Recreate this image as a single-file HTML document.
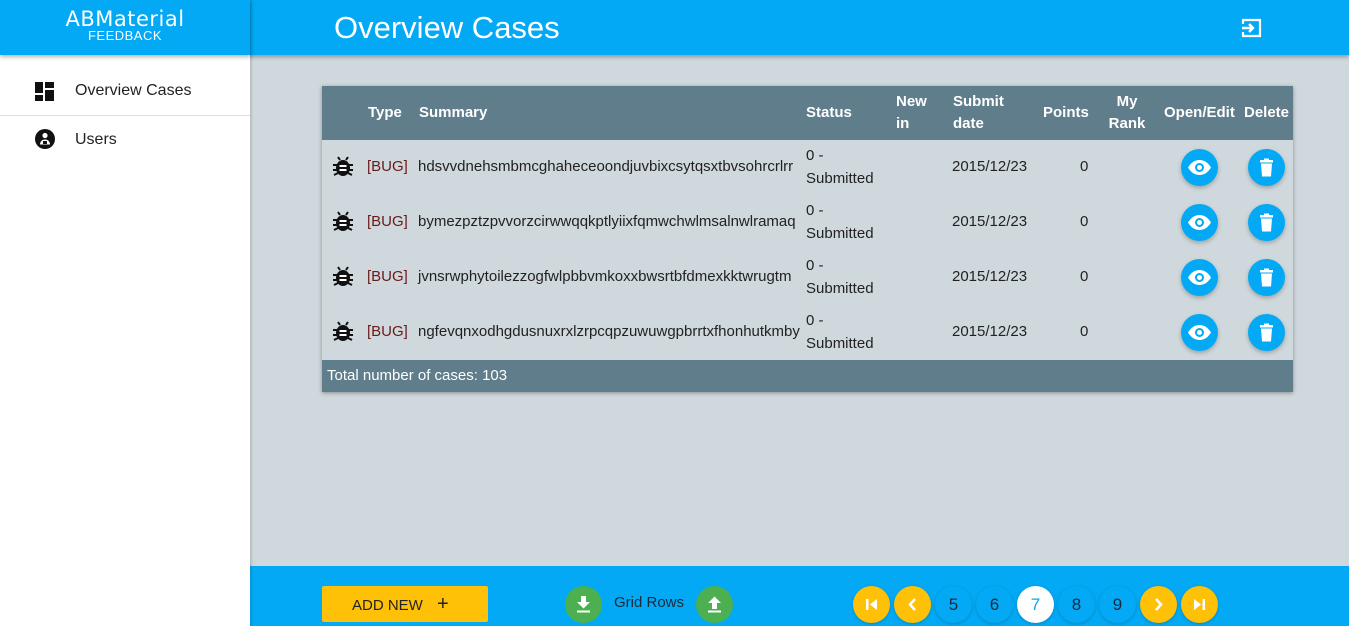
<!DOCTYPE html>
<html style="width:1349px;height:626px;overflow:hidden"><head><meta charset="utf-8"><style>
*{margin:0;padding:0;box-sizing:border-box}
body{width:1349px;height:626px;overflow:hidden;background:#cfd8dc;font-family:"Liberation Sans",Arial,sans-serif;position:relative}
.a{position:absolute}
.hdr{left:0;top:0;width:1349px;height:55px;background:#03a9f4;box-shadow:0 2px 4px rgba(0,0,0,.3)}
.side{left:0;top:0;width:250px;height:626px;background:#fff;box-shadow:1px 0 3px rgba(0,0,0,.2);z-index:2}
.logo{left:0;top:0;width:250px;height:55px;background:#03a9f4;color:#fff;text-align:center;box-shadow:0 2px 4px rgba(0,0,0,.3)}
.tbl{left:322px;top:86px;width:971px;height:306px;background:#cfd8dc;box-shadow:0 1px 4px rgba(0,0,0,.35)}
.th{left:0;top:0;width:971px;height:54px;background:#607d8b}
.hc{color:#fff;font-weight:bold;font-size:15px;line-height:22px}
.td{font-size:15px;color:#222;line-height:23px}
.circ{border-radius:50%;width:37px;height:37px;background:#03a9f4;box-shadow:0 2px 4px rgba(0,0,0,.25)}
.foot{left:0;top:566px;width:1349px;height:60px;background:#03a9f4}
.pg{width:37px;height:37px;border-radius:50%;top:586px;background:#03a9f4;box-shadow:0 1px 3px rgba(0,0,0,.2);color:#1a2a3a;font-size:17px;text-align:center;line-height:37px}
.y{background:#ffc107;color:#fff}
</style></head><body>
<div class="a hdr"></div>
<div class="a" style="left:334px;top:10px;color:#fff;font-size:31px;">Overview Cases</div>
<svg class="a" style="left:1241px;top:18px" width="22" height="20" viewBox="0 0 22 20"><path d="M2 6V2h17v16H2v-4" fill="none" stroke="#fff" stroke-width="2.2"/><path d="M1 10h11M8 6l4 4-4 4" fill="none" stroke="#fff" stroke-width="2.4"/></svg>
<div class="a side"></div>
<div class="a logo" style="z-index:3"><div style="font-size:21px;letter-spacing:0.5px;padding-top:9px;line-height:20px;font-family:'DejaVu Sans',sans-serif">ABMaterial</div><div style="font-size:13px;line-height:14px;letter-spacing:.5px">FEEDBACK</div></div>
<div class="a" style="z-index:3;left:0;top:115px;width:250px;height:1px;background:#ddd"></div>
<svg class="a" style="z-index:3;left:35px;top:82px" width="19" height="19" viewBox="0 0 19 19"><rect x="0" y="0" width="8" height="11" fill="#111"/><rect x="0" y="13" width="8" height="6" fill="#111"/><rect x="10" y="0" width="9" height="6" fill="#111"/><rect x="10" y="8" width="9" height="11" fill="#111"/></svg>
<div class="a" style="z-index:3;left:75px;top:82px;font-size:16px;color:#222">Overview Cases</div>
<svg class="a" style="z-index:3;left:35px;top:129px" width="20" height="20" viewBox="0 0 20 20"><circle cx="10" cy="10" r="10" fill="#111"/><circle cx="10" cy="6.5" r="2.6" fill="#fff"/><path d="M5 15.5c0-3 2.2-5 5-5s5 2 5 5z" fill="#fff"/><rect x="8" y="12" width="4" height="3" fill="#111"/></svg>
<div class="a" style="z-index:3;left:75px;top:131px;font-size:16px;color:#222">Users</div>

<div class="a tbl">
<div class="a th"></div>
<div class="a hc" style="left:46px;top:16px">Type</div>
<div class="a hc" style="left:97px;top:16px">Summary</div>
<div class="a hc" style="left:484px;top:16px">Status</div>
<div class="a hc" style="left:574px;top:5px">New<br>in</div>
<div class="a hc" style="left:631px;top:5px">Submit<br>date</div>
<div class="a hc" style="left:721px;top:16px">Points</div>
<div class="a hc" style="left:786px;top:5px;text-align:center;width:38px">My<br>Rank</div>
<div class="a hc" style="left:842px;top:16px">Open/Edit</div>
<div class="a hc" style="left:922px;top:16px">Delete</div>
<div class="a" style="left:0;top:274px;width:971px;height:32px;background:#607d8b;color:#fff;font-size:15px;line-height:32px;padding-left:5px">Total number of cases: 103</div>
</div>

<svg width="0" height="0" style="position:absolute"><defs>
<g id="bug"><path d="M7 2l2 3M17 2l-2 3" stroke="#111" stroke-width="2"/><ellipse cx="12" cy="13" rx="7" ry="8" fill="#111"/><path d="M2 10h4M18 10h4M2 15h4M18 15h4M3 20l4-2M21 20l-4-2" stroke="#111" stroke-width="2"/><rect x="8.5" y="10" width="7" height="2" fill="#fff"/><rect x="8.5" y="14" width="7" height="2" fill="#fff"/></g>
</defs></svg>

<svg class="a" style="left:331px;top:155px" width="24" height="24" viewBox="0 0 24 24"><use href="#bug"/></svg>
<div class="a td" style="left:367px;top:155px;color:#6a1a1a">[BUG]</div>
<div class="a td" style="left:418px;top:155px">hdsvvdnehsmbmcghaheceoondjuvbixcsytqsxtbvsohrcrlrr</div>
<div class="a td" style="left:806px;top:144px">0 -<br>Submitted</div>
<div class="a td" style="left:952px;top:155px">2015/12/23</div>
<div class="a td" style="left:1080px;top:155px">0</div>

<svg class="a" style="left:331px;top:210px" width="24" height="24" viewBox="0 0 24 24"><use href="#bug"/></svg>
<div class="a td" style="left:367px;top:210px;color:#6a1a1a">[BUG]</div>
<div class="a td" style="left:418px;top:210px">bymezpztzpvvorzcirwwqqkptlyiixfqmwchwlmsalnwlramaq</div>
<div class="a td" style="left:806px;top:199px">0 -<br>Submitted</div>
<div class="a td" style="left:952px;top:210px">2015/12/23</div>
<div class="a td" style="left:1080px;top:210px">0</div>

<svg class="a" style="left:331px;top:265px" width="24" height="24" viewBox="0 0 24 24"><use href="#bug"/></svg>
<div class="a td" style="left:367px;top:265px;color:#6a1a1a">[BUG]</div>
<div class="a td" style="left:418px;top:265px">jvnsrwphytoilezzogfwlpbbvmkoxxbwsrtbfdmexkktwrugtm</div>
<div class="a td" style="left:806px;top:254px">0 -<br>Submitted</div>
<div class="a td" style="left:952px;top:265px">2015/12/23</div>
<div class="a td" style="left:1080px;top:265px">0</div>

<svg class="a" style="left:331px;top:320px" width="24" height="24" viewBox="0 0 24 24"><use href="#bug"/></svg>
<div class="a td" style="left:367px;top:320px;color:#6a1a1a">[BUG]</div>
<div class="a td" style="left:418px;top:320px">ngfevqnxodhgdusnuxrxlzrpcqpzuwuwgpbrrtxfhonhutkmby</div>
<div class="a td" style="left:806px;top:309px">0 -<br>Submitted</div>
<div class="a td" style="left:952px;top:320px">2015/12/23</div>
<div class="a td" style="left:1080px;top:320px">0</div>

<div class="a circ" style="left:1181px;top:149px"><svg width="37" height="37" viewBox="0 0 37 37"><path d="M7 18.5c3-5 7-7.5 11.5-7.5s8.5 2.5 11.5 7.5c-3 5-7 7.5-11.5 7.5S10 23.5 7 18.5z" fill="#fff"/><circle cx="18.5" cy="18.5" r="4.5" fill="#03a9f4"/><circle cx="18.5" cy="18.5" r="2.5" fill="#fff"/></svg></div>
<div class="a circ" style="left:1248px;top:149px"><svg width="37" height="37" viewBox="0 0 37 37"><rect x="12" y="11" width="13" height="2.5" fill="#fff"/><rect x="16" y="9.5" width="5" height="2" fill="#fff"/><path d="M13 14.5h11l-1 13h-9z" fill="#fff"/></svg></div>
<div class="a circ" style="left:1181px;top:204px"><svg width="37" height="37" viewBox="0 0 37 37"><path d="M7 18.5c3-5 7-7.5 11.5-7.5s8.5 2.5 11.5 7.5c-3 5-7 7.5-11.5 7.5S10 23.5 7 18.5z" fill="#fff"/><circle cx="18.5" cy="18.5" r="4.5" fill="#03a9f4"/><circle cx="18.5" cy="18.5" r="2.5" fill="#fff"/></svg></div>
<div class="a circ" style="left:1248px;top:204px"><svg width="37" height="37" viewBox="0 0 37 37"><rect x="12" y="11" width="13" height="2.5" fill="#fff"/><rect x="16" y="9.5" width="5" height="2" fill="#fff"/><path d="M13 14.5h11l-1 13h-9z" fill="#fff"/></svg></div>
<div class="a circ" style="left:1181px;top:259px"><svg width="37" height="37" viewBox="0 0 37 37"><path d="M7 18.5c3-5 7-7.5 11.5-7.5s8.5 2.5 11.5 7.5c-3 5-7 7.5-11.5 7.5S10 23.5 7 18.5z" fill="#fff"/><circle cx="18.5" cy="18.5" r="4.5" fill="#03a9f4"/><circle cx="18.5" cy="18.5" r="2.5" fill="#fff"/></svg></div>
<div class="a circ" style="left:1248px;top:259px"><svg width="37" height="37" viewBox="0 0 37 37"><rect x="12" y="11" width="13" height="2.5" fill="#fff"/><rect x="16" y="9.5" width="5" height="2" fill="#fff"/><path d="M13 14.5h11l-1 13h-9z" fill="#fff"/></svg></div>
<div class="a circ" style="left:1181px;top:314px"><svg width="37" height="37" viewBox="0 0 37 37"><path d="M7 18.5c3-5 7-7.5 11.5-7.5s8.5 2.5 11.5 7.5c-3 5-7 7.5-11.5 7.5S10 23.5 7 18.5z" fill="#fff"/><circle cx="18.5" cy="18.5" r="4.5" fill="#03a9f4"/><circle cx="18.5" cy="18.5" r="2.5" fill="#fff"/></svg></div>
<div class="a circ" style="left:1248px;top:314px"><svg width="37" height="37" viewBox="0 0 37 37"><rect x="12" y="11" width="13" height="2.5" fill="#fff"/><rect x="16" y="9.5" width="5" height="2" fill="#fff"/><path d="M13 14.5h11l-1 13h-9z" fill="#fff"/></svg></div>

<div class="a foot"></div>
<div class="a" style="left:322px;top:586px;width:166px;height:36px;background:#ffc107;border-radius:2px;color:#222;font-size:15px;line-height:36px;padding-left:30px">ADD NEW <span style="font-size:20px;margin-left:10px">+</span></div>
<div class="a" style="left:565px;top:586px;width:37px;height:37px;border-radius:50%;background:#4caf50"><svg width="37" height="37" viewBox="0 0 37 37"><path d="M16 10h5v6h4l-6.5 6.5L12 16h4z" fill="#fff"/><rect x="12" y="24.5" width="13" height="2" fill="#fff"/></svg></div>
<div class="a" style="left:614px;top:594px;font-size:15px;color:#1a2a3a">Grid Rows</div>
<div class="a" style="left:696px;top:586px;width:37px;height:37px;border-radius:50%;background:#4caf50"><svg width="37" height="37" viewBox="0 0 37 37"><path d="M16 23h5v-6h4l-6.5-6.5L12 17h4z" fill="#fff"/><rect x="12" y="24.5" width="13" height="2" fill="#fff"/></svg></div>

<div class="a pg y" style="left:853px"><svg width="37" height="37" viewBox="0 0 37 37"><rect x="13" y="13" width="2.5" height="11" fill="#fff"/><path d="M24 13v11l-7-5.5z" fill="#fff"/></svg></div>
<div class="a pg y" style="left:894px"><svg width="37" height="37" viewBox="0 0 37 37"><path d="M21 13l-5 5.5 5 5.5" fill="none" stroke="#fff" stroke-width="2.5"/></svg></div>
<div class="a pg" style="left:935px">5</div>
<div class="a pg" style="left:976px">6</div>
<div class="a pg" style="left:1017px;background:#fff;color:#03a9f4">7</div>
<div class="a pg" style="left:1058px">8</div>
<div class="a pg" style="left:1099px">9</div>
<div class="a pg y" style="left:1140px"><svg width="37" height="37" viewBox="0 0 37 37"><path d="M16 13l5 5.5-5 5.5" fill="none" stroke="#fff" stroke-width="2.5"/></svg></div>
<div class="a pg y" style="left:1181px"><svg width="37" height="37" viewBox="0 0 37 37"><path d="M13 13v11l7-5.5z" fill="#fff"/><rect x="21.5" y="13" width="2.5" height="11" fill="#fff"/></svg></div>
</body></html>
